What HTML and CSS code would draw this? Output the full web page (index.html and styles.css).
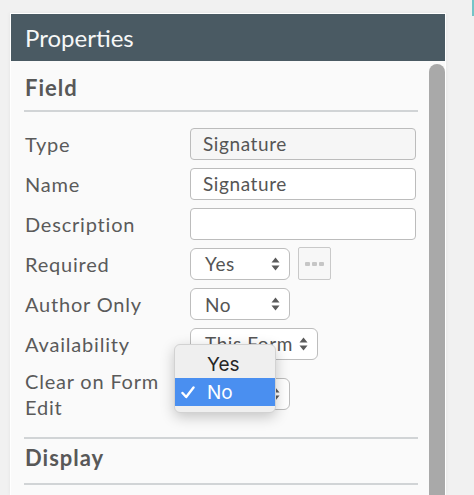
FILE: index.html
```html
<!DOCTYPE html>
<html lang="en">
<head>
<meta charset="utf-8">
<title>Properties</title>
<link rel="stylesheet" href="styles.css">
</head>
<body>
<div class="page">
  <div class="panel">
    <div class="panel-header">Properties</div>
    <div class="panel-body">
      <div class="content">
        <section class="section section-field">
          <h2 class="section-title">Field</h2>
          <div class="rows">
            <div class="row">
              <span class="label">Type</span>
              <div class="control"><div class="text-input is-disabled">Signature</div></div>
            </div>
            <div class="row">
              <span class="label">Name</span>
              <div class="control"><div class="text-input">Signature</div></div>
            </div>
            <div class="row">
              <span class="label">Description</span>
              <div class="control"><div class="text-input"></div></div>
            </div>
            <div class="row">
              <span class="label">Required</span>
              <div class="control">
                <div class="select select-short"><span class="select-value">Yes</span>
                  <svg class="arrows" width="9" height="14" viewBox="0 0 9 14"><path d="M0.5 5.5 L4.5 0.5 L8.5 5.5 Z M0.5 8.5 L4.5 13.5 L8.5 8.5 Z" fill="#5a5a5a"/></svg>
                </div>
                <div class="dots-btn"><span class="dot"></span><span class="dot"></span><span class="dot"></span></div>
              </div>
            </div>
            <div class="row">
              <span class="label">Author Only</span>
              <div class="control">
                <div class="select select-short"><span class="select-value">No</span>
                  <svg class="arrows" width="9" height="14" viewBox="0 0 9 14"><path d="M0.5 5.5 L4.5 0.5 L8.5 5.5 Z M0.5 8.5 L4.5 13.5 L8.5 8.5 Z" fill="#5a5a5a"/></svg>
                </div>
              </div>
            </div>
            <div class="row">
              <span class="label">Availability</span>
              <div class="control">
                <div class="select select-wide"><span class="select-value">This Form</span>
                  <svg class="arrows" width="9" height="14" viewBox="0 0 9 14"><path d="M0.5 5.5 L4.5 0.5 L8.5 5.5 Z M0.5 8.5 L4.5 13.5 L8.5 8.5 Z" fill="#5a5a5a"/></svg>
                </div>
              </div>
            </div>
            <div class="row">
              <span class="label">Clear on Form<br>Edit</span>
              <div class="control control-anchor">
                <div class="select select-short"><span class="select-value">No</span>
                  <svg class="arrows" width="9" height="14" viewBox="0 0 9 14"><path d="M0.5 5.5 L4.5 0.5 L8.5 5.5 Z M0.5 8.5 L4.5 13.5 L8.5 8.5 Z" fill="#5a5a5a"/></svg>
                </div>
                <div class="popup">
                  <div class="popup-item"><span class="check"></span>Yes</div>
                  <div class="popup-item is-selected"><span class="check"><svg width="14" height="13" viewBox="0 0 14 13"><path d="M1.5 7 L5.2 11 L12.5 1.5" fill="none" stroke="#ffffff" stroke-width="2.4" stroke-linecap="round" stroke-linejoin="round"/></svg></span>No</div>
                </div>
              </div>
            </div>
          </div>
        </section>
        <section class="section section-display">
          <h2 class="section-title">Display</h2>
        </section>
      </div>
      <div class="scrollbar"><div class="thumb"></div></div>
    </div>
  </div>
  <div class="side"><div class="side-accent"></div></div>
</div>
</body>
</html>
```
FILE: styles.css
```css
html, body {
  margin: 0;
  padding: 0;
  height: 495px;
  overflow: hidden;
  background: #f1f1f1;
}

.page {
  display: flex;
  align-items: flex-start;
  padding: 13px 0 0 10px;
  height: 482px;
  font-family: Lato, "Open Sans", sans-serif;
  color: #5a5a5a;
}

.panel {
  width: 434px;
  height: 481px;
  border: 1px solid #ffffff;
  border-bottom: none;
  box-shadow: 0 0 4px rgba(0, 0, 0, 0.06);
  background: #fafafa;
  display: flex;
  flex-direction: column;
  overflow: hidden;
}

.panel-header {
  height: 47px;
  line-height: 47px;
  background: #4a5a63;
  color: #f6f7f7;
  font-size: 24px;
  padding-left: 14px;
}

.panel-body {
  display: flex;
  flex: 1;
  min-height: 0;
}

.content {
  flex: 1;
  padding: 0 11px 0 13px;
}

.section-title {
  margin: 0;
  font-size: 22px;
  font-weight: 700;
  letter-spacing: 1px;
  line-height: 30px;
  color: #585858;
  padding-left: 1px;
  border-bottom: 2px solid #d1d4d6;
}

.section-field .section-title {
  padding-top: 11.5px;
  padding-bottom: 7.5px;
}

.rows {
  display: flex;
  flex-direction: column;
  gap: 7.8px;
  margin-top: 16px;
  padding-bottom: 17px;
  padding-right: 2px;
}

.row {
  display: flex;
  align-items: center;
}

.label {
  width: 165px;
  padding-left: 1px;
  font-size: 20px;
  letter-spacing: 0.8px;
  line-height: 26px;
  color: #5a5a5a;
  white-space: nowrap;
}

.control {
  flex: 1;
  display: flex;
  align-items: center;
  gap: 8px;
}

.control-anchor {
  position: relative;
}

.text-input {
  flex: 1;
  height: 30px;
  line-height: 30px;
  border: 1px solid #bcbcbc;
  border-radius: 4px;
  background: #ffffff;
  padding-left: 12px;
  font-size: 19px;
  letter-spacing: 0.6px;
  color: #555555;
}

.text-input.is-disabled {
  background: #f6f6f6;
}

.select {
  position: relative;
  box-sizing: border-box;
  height: 32px;
  border: 1px solid #bdbdbd;
  border-radius: 6px;
  background: #ffffff;
  padding: 0 9px 0 14px;
  font-size: 19px;
  letter-spacing: 0.6px;
  color: #555555;
  display: flex;
  align-items: center;
  justify-content: space-between;
}

.select-short {
  width: 100px;
}

.select-wide {
  width: 128px;
}

.arrows {
  display: block;
  flex-shrink: 0;
}

.dots-btn {
  width: 33px;
  height: 33px;
  box-sizing: border-box;
  border: 1px solid #c9c9c9;
  border-radius: 2px;
  background: #f7f7f7;
  display: flex;
  align-items: center;
  justify-content: center;
  gap: 2px;
}

.dot {
  width: 5px;
  height: 4px;
  background: #c6c6c6;
  border-radius: 1px;
}

.popup {
  position: absolute;
  left: -16px;
  top: -33.8px;
  width: 102px;
  padding: 6px 0;
  background: #efefef;
  border: 1px solid #d2d2d2;
  border-radius: 6px;
  box-shadow: 0 4px 14px rgba(0, 0, 0, 0.22);
  box-sizing: border-box;
  font-family: Inter, "Noto Sans", sans-serif;
  font-size: 19px;
  color: #262626;
  overflow: hidden;
}

.popup-item {
  display: flex;
  align-items: center;
  height: 27.5px;
  padding-left: 6px;
}

.popup-item.is-selected {
  background: #4a8ff0;
  color: #ffffff;
}

.check {
  width: 26px;
  display: flex;
  align-items: center;
}

.section-display {
  border-top: 2px solid #d1d4d6;
}

.section-display .section-title {
  padding-top: 4.5px;
  padding-bottom: 9.5px;
}

.scrollbar {
  width: 16px;
  padding-top: 3px;
}

.thumb {
  height: 460px;
  background: #a9a9a9;
  border-radius: 8px 8px 0 0;
}

.side {
  flex: 1;
  display: flex;
  justify-content: flex-end;
  margin-top: -13px;
}

.side-accent {
  width: 2px;
  height: 16px;
  background: #74c4c7;
}
```
